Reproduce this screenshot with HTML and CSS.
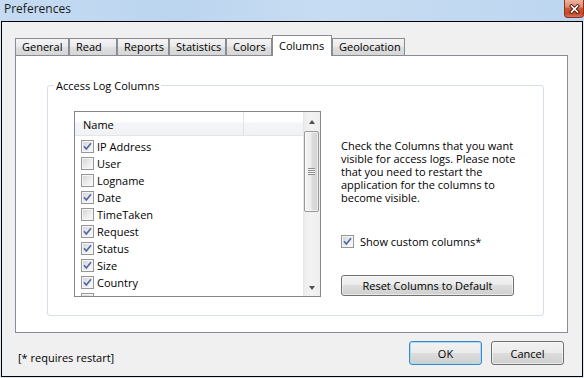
FILE: index.html
```html
<!DOCTYPE html>
<html>
<head>
<meta charset="utf-8">
<title>Preferences</title>
<link rel="stylesheet" href="styles.css">
</head>
<body>
<div class="window">
  <div class="titlebar">
    <span class="title">Preferences</span>
    <div class="close">
      <svg width="11" height="10" viewBox="0 0 11 10"><path d="M2.5 2 L8.5 8 M8.5 2 L2.5 8" stroke="#4a1a10" stroke-width="3.4" stroke-linecap="square" fill="none"/><path d="M2.5 2 L8.5 8 M8.5 2 L2.5 8" stroke="#ffffff" stroke-width="1.6" stroke-linecap="square" fill="none"/></svg>
    </div>
  </div>
  <div class="client">
    <div class="tabs">
      <div class="tab t-general">General</div>
      <div class="tab t-read">Read</div>
      <div class="tab t-reports">Reports</div>
      <div class="tab t-stats">Statistics</div>
      <div class="tab t-colors">Colors</div>
      <div class="tab sel t-columns">Columns</div>
      <div class="tab t-geo">Geolocation</div>
    </div>
    <div class="pane">
      <fieldset class="group">
        <legend>Access Log Columns</legend>
        <div class="group-body">
          <div class="list">
            <div class="list-main">
              <div class="list-head"><div class="col1">Name</div><div class="col2"></div></div>
              <div class="rows">
                <div class="row"><span class="cb"><svg viewBox="0 0 11 11"><path d="M2 5.3 L4.3 8 L9 2.3" /></svg></span>IP Address</div>
                <div class="row"><span class="cb"></span>User</div>
                <div class="row"><span class="cb"></span>Logname</div>
                <div class="row"><span class="cb"><svg viewBox="0 0 11 11"><path d="M2 5.3 L4.3 8 L9 2.3" /></svg></span>Date</div>
                <div class="row"><span class="cb"></span>TimeTaken</div>
                <div class="row"><span class="cb"><svg viewBox="0 0 11 11"><path d="M2 5.3 L4.3 8 L9 2.3" /></svg></span>Request</div>
                <div class="row"><span class="cb"><svg viewBox="0 0 11 11"><path d="M2 5.3 L4.3 8 L9 2.3" /></svg></span>Status</div>
                <div class="row"><span class="cb"><svg viewBox="0 0 11 11"><path d="M2 5.3 L4.3 8 L9 2.3" /></svg></span>Size</div>
                <div class="row"><span class="cb"><svg viewBox="0 0 11 11"><path d="M2 5.3 L4.3 8 L9 2.3" /></svg></span>Country</div>
                <div class="row"><span class="cb"></span></div>
              </div>
            </div>
            <div class="vscroll">
              <div class="sb-btn"><i class="arrow-up"></i></div>
              <div class="sb-track"><div class="thumb"><i class="grip"></i></div></div>
              <div class="sb-btn"><i class="arrow-down"></i></div>
            </div>
          </div>
          <div class="side">
            <p class="note">Check the Columns that you want<br>visible for access logs. Please note<br>that you need to restart the<br>application for the columns to<br>become visible.</p>
            <label class="check-row"><span class="cb"><svg viewBox="0 0 11 11"><path d="M2 5.3 L4.3 8 L9 2.3" /></svg></span>Show custom columns*</label>
            <button class="btn reset">Reset Columns to Default</button>
          </div>
        </div>
      </fieldset>
    </div>
    <div class="footer">
      <span class="hint">[* requires restart]</span>
      <div class="actions">
        <button class="btn default">OK</button>
        <button class="btn">Cancel</button>
      </div>
    </div>
  </div>
</div>
</body>
</html>
```
FILE: styles.css
```css
body {
  margin: 0;
  width: 584px;
  height: 378px;
  overflow: hidden;
  background: #dce8f4;
  font-family: "Open Sans", "Noto Sans", sans-serif;
  font-size: 11px;
  color: #000;
}

.window {
  display: flex;
  flex-direction: column;
  height: 378px;
}

.titlebar {
  height: 21px;
  display: flex;
  justify-content: space-between;
  align-items: flex-start;
  background: linear-gradient(90deg, #c4dbf2 0%, #bcd5ef 30%, #c6dcf2 55%, #bdd6f0 100%);
}

.title {
  font-size: 12px;
  line-height: 18px;
  padding-left: 4px;
  color: #1a1a1a;
}

.close {
  width: 20px;
  height: 18px;
  box-sizing: border-box;
  border: 1px solid #8a3320;
  border-top: none;
  border-radius: 0 0 4px 4px;
  background: linear-gradient(#eeb3a0 0%, #e08a70 40%, #cf5534 50%, #c74a28 80%, #d8735a 100%);
  display: flex;
  align-items: center;
  justify-content: center;
}

.client {
  margin-left: 1px;
  width: 582px;
  height: 356px;
  box-sizing: border-box;
  border: 1px solid #000;
  background: #f0f0f0;
  padding: 13px 14px 0 13px;
  display: flex;
  flex-direction: column;
}

.tabs {
  display: flex;
  align-items: flex-end;
  height: 20px;
}

.tab {
  box-sizing: border-box;
  height: 17px;
  border: 1px solid #898c95;
  border-bottom: none;
  padding: 0 0 0 6px;
  line-height: 15px;
  white-space: nowrap;
  background: linear-gradient(#f4f4f4 0%, #ebebeb 45%, #dedede 55%, #d6d6d6 100%);
}

.tab.sel {
  height: 21px;
  margin-bottom: -1px;
  padding-top: 2px;
  background: #fff;
  position: relative;
  z-index: 1;
}

.t-general { width: 54px; }
.t-read { width: 48px; }
.t-reports { width: 52px; }
.t-stats { width: 57px; }
.t-colors { width: 46px; }
.t-columns { width: 60px; }
.t-geo { width: 73px; }

.pane {
  box-sizing: border-box;
  height: 278px;
  border: 1px solid #898c95;
  background: #fff;
  padding: 22px 23px 0 31px;
}

.group {
  margin: 0;
  box-sizing: border-box;
  width: 497px;
  height: 238px;
  min-width: 0;
  border: 1px solid #d5dfe5;
  border-radius: 3px;
  padding: 18px 0 0 6px;
}

.group legend {
  padding: 0 2px;
  line-height: 15px;
}

.group-body {
  display: flex;
  align-items: flex-start;
  margin-left: 20px;
}

.list {
  box-sizing: border-box;
  width: 247px;
  height: 186px;
  border: 1px solid #828790;
  background: #fff;
  display: flex;
}

.list-main {
  flex: 1;
  min-width: 0;
  display: flex;
  flex-direction: column;
  overflow: hidden;
}

.list-head {
  display: flex;
  flex: none;
  height: 24px;
  box-sizing: border-box;
  border-bottom: 1px solid #e3e5e7;
  background: linear-gradient(#ffffff 0%, #ffffff 42%, #f4f5f7 48%, #f1f2f4 100%);
}

.col1 {
  width: 169px;
  box-sizing: border-box;
  border-right: 1px solid #e1e3e6;
  padding: 3px 0 0 8px;
  line-height: 19px;
}

.col2 {
  flex: 1;
}

.rows {
  padding-top: 2px;
}

.row {
  height: 17px;
  display: flex;
  align-items: center;
  gap: 3px;
  padding-left: 6px;
  white-space: nowrap;
}

.cb {
  flex: none;
  width: 13px;
  height: 13px;
  box-sizing: border-box;
  border: 1px solid #969696;
  background: #f6f6f6;
  display: grid;
}

.cb::before {
  content: "";
  grid-area: 1 / 1;
  margin: 1px;
  background: linear-gradient(135deg, #d2d4d7 0%, #e8e9ea 45%, #f8f8f8 100%);
}

.cb svg {
  grid-area: 1 / 1;
  width: 11px;
  height: 11px;
}

.cb svg path {
  fill: none;
  stroke: #5064a6;
  stroke-width: 1.6;
}

.vscroll {
  flex: none;
  width: 17px;
  display: flex;
  flex-direction: column;
  background: linear-gradient(90deg, #e4e4e4 0%, #eeeeee 12%, #f3f3f3 50%, #eeeeee 100%);
}

.sb-btn {
  height: 17px;
  flex: none;
  display: flex;
  align-items: center;
  justify-content: center;
}

.arrow-up {
  margin-top: 3px;
  width: 0;
  height: 0;
  border-left: 3.5px solid transparent;
  border-right: 3.5px solid transparent;
  border-bottom: 4px solid #505050;
}

.arrow-down {
  margin-top: 1px;
  width: 0;
  height: 0;
  border-left: 3.5px solid transparent;
  border-right: 3.5px solid transparent;
  border-top: 4px solid #505050;
}

.sb-track {
  flex: 1;
  padding-top: 2px;
}

.thumb {
  margin-left: 1px;
  width: 15px;
  height: 81px;
  box-sizing: border-box;
  border: 1px solid #989898;
  border-radius: 2px;
  background: linear-gradient(90deg, #f4f4f4 0%, #ececec 45%, #dcdcdc 55%, #d2d2d2 100%);
  box-shadow: inset 0 0 0 1px rgba(255, 255, 255, 0.6);
  display: flex;
  align-items: center;
  justify-content: center;
}

.grip {
  width: 7px;
  height: 7px;
  background: repeating-linear-gradient(#8c8c8c 0 1px, #f8f8f8 1px 2px);
}

.side {
  margin-left: 20px;
  padding-top: 28px;
  display: flex;
  flex-direction: column;
  align-items: flex-start;
}

.note {
  margin: 0;
  line-height: 13px;
  white-space: nowrap;
}

.check-row {
  display: flex;
  align-items: center;
  gap: 6px;
  height: 17px;
  margin-top: 29px;
}

.btn {
  font: inherit;
  color: #000;
  box-sizing: border-box;
  border: 1px solid #707070;
  border-radius: 3px;
  background: linear-gradient(#f2f2f2 0%, #ebebeb 49%, #dddddd 50%, #cfcfcf 100%);
  box-shadow: inset 0 0 0 1px rgba(255, 255, 255, 0.55);
  padding: 0;
  line-height: 15px;
}

.reset {
  width: 173px;
  height: 21px;
  margin-top: 25px;
}

.footer {
  flex: 1;
  display: flex;
  justify-content: space-between;
  align-items: flex-start;
  padding: 8px 4px 0 3px;
}

.hint {
  margin-top: 9px;
  line-height: 15px;
}

.actions {
  display: flex;
  gap: 9px;
}

.actions .btn {
  width: 73px;
  height: 24px;
}

.btn.default {
  border-color: #3c8ac4;
  box-shadow: inset 0 0 0 1px #a8dcf6;
}
```
